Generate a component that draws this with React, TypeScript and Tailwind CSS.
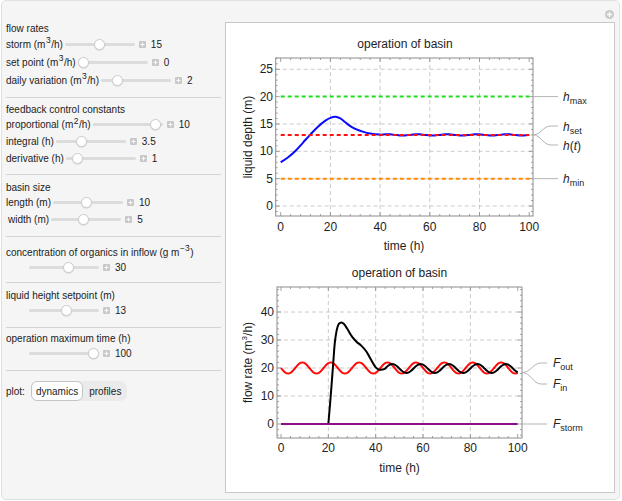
import React from 'react'

type Pt = [number, number]

const X1 = (t: number) => 280.7 + t * 2.485
const Y1 = (h: number) => 206 - h * 5.47
const X2 = (t: number) => 281 + t * 2.367
const Y2 = (f: number) => 424 - f * 2.8

const range = (a: number, b: number, s: number) => {
    const out: number[] = []
    for (let v = a; v <= b + 1e-9; v += s) out.push(Math.round(v * 100) / 100)
    return out
}

// catmull-rom through the points, as cubic beziers
const smooth = (pts: Pt[]) => {
    let d = `M${pts[0][0].toFixed(2)},${pts[0][1].toFixed(2)}`
    for (let i = 0; i < pts.length - 1; i++) {
        const p0 = pts[i - 1] || pts[i]
        const p1 = pts[i]
        const p2 = pts[i + 1]
        const p3 = pts[i + 2] || p2
        const c1x = p1[0] + (p2[0] - p0[0]) / 6
        const c1y = p1[1] + (p2[1] - p0[1]) / 6
        const c2x = p2[0] - (p3[0] - p1[0]) / 6
        const c2y = p2[1] - (p3[1] - p1[1]) / 6
        d += ` C${c1x.toFixed(2)},${c1y.toFixed(2)} ${c2x.toFixed(2)},${c2y.toFixed(2)} ${p2[0].toFixed(2)},${p2[1].toFixed(2)}`
    }
    return d
}

const poly = (pts: Pt[]) => pts.map(([x, y], i) => `${i ? 'L' : 'M'}${x.toFixed(2)},${y.toFixed(2)}`).join('')

// liquid depth h(t)
const depthPts: Pt[] = [
    [0, 8], [3, 8.9], [6, 10.1], [9, 11.6], [12, 13.1], [15, 14.5], [18, 15.6], [20, 16.1], [22, 16.3],
    [24, 16.0], [26, 15.3], [28, 14.6], [30, 14.1], [33, 13.6], [36, 13.25], [40, 13.05],
    ...range(42, 100, 2).map((t) => [t, 13 + 0.12 * Math.sin((2 * Math.PI * (t - 40)) / 12)] as Pt),
]

const fin = (t: number) => 20 - 2 * Math.sin((2 * Math.PI * t) / 12)
const foutPts: Pt[] = [
    [20, 0], [21, 10], [22, 21], [22.8, 29.5], [24, 35], [25.3, 36.2], [26.5, 35.8], [28, 34], [30, 31.2],
    [32, 29.3], [34, 27.9], [36, 26], [38, 23], [40, 20.2], [41.5, 19.4], [43, 19.5],
    ...range(44, 100, 1).map((t) => [t, 19.8 + 1.6 * Math.sin((2 * Math.PI * (t - 8)) / 12)] as Pt),
]

type FrameProps = {
    l: number, r: number, t: number, b: number,
    X: (v: number) => number, Y: (v: number) => number,
    xTicks: number[], yTicks: number[], xMaj: number, yMaj: number,
    xGrid: number[], yGrid: number[],
}

function Frame({l, r, t, b, X, Y, xTicks, yTicks, xMaj, yMaj, xGrid, yGrid}: FrameProps) {
    const grid: string[] = []
    xGrid.forEach((v) => grid.push(`M${X(v)},${t}V${b}`))
    yGrid.forEach((v) => grid.push(`M${l},${Y(v)}H${r}`))
    const ticks: string[] = []
    xTicks.forEach((v) => {
        const x = X(v)
        if (x < l || x > r) return
        const len = v % xMaj === 0 ? 4 : 2
        ticks.push(`M${x},${b}v${-len}M${x},${t}v${len}`)
    })
    yTicks.forEach((v) => {
        const y = Y(v)
        if (y < t || y > b) return
        const len = v % yMaj === 0 ? 4 : 2
        ticks.push(`M${l},${y}h${len}M${r},${y}h${-len}`)
    })
    return (
        <g>
            <path d={grid.join('')} stroke="#bdbdbd" strokeWidth={0.8} strokeDasharray="4 3" fill="none"/>
            <path d={ticks.join('')} stroke="#8c8c8c" strokeWidth={0.8} fill="none"/>
            <rect x={l} y={t} width={r - l} height={b - t} fill="none" stroke="#8c8c8c" strokeWidth={1}/>
        </g>
    )
}

function DepthChart() {
    const l = 275.7, r = 533, t = 58, b = 216
    const lead = '#b4b4b4'
    return (
        <svg width="388" height="235" viewBox="226 23 388 235" className="block">
            <text x={405} y={48} fontSize={12} textAnchor="middle" fill="#1e1e1e">operation of basin</text>
            <Frame l={l} r={r} t={t} b={b} X={X1} Y={Y1}
                   xTicks={range(0, 100, 4)} yTicks={range(-1, 27, 1)} xMaj={20} yMaj={5}
                   xGrid={[20, 40, 60, 80]} yGrid={[0, 5, 10, 15, 25]}/>
            <path d={`M${X1(0)},${Y1(20)}H${X1(100)}`} stroke="#1fdc1f" strokeWidth={2} strokeDasharray="4 3"/>
            <path d={`M${X1(0)},${Y1(5)}H${X1(100)}`} stroke="#ff8a00" strokeWidth={2} strokeDasharray="4 3"/>
            <path d={smooth(depthPts.map(([a, c]) => [X1(a), Y1(c)] as Pt))} stroke="#0a0aff" strokeWidth={2} fill="none"/>
            <path d={`M${X1(0)},${Y1(13)}H${X1(100)}`} stroke="#ff1010" strokeWidth={2} strokeDasharray="4 3"/>

            {range(0, 100, 20).map((v) => (
                <text key={v} x={X1(v)} y={231} fontSize={12} textAnchor="middle" fill="#1e1e1e">{v}</text>
            ))}
            {range(0, 25, 5).map((v) => (
                <text key={v} x={273} y={Y1(v) + 4} fontSize={12} textAnchor="end" fill="#1e1e1e">{v}</text>
            ))}
            <text x={404} y={250} fontSize={12} textAnchor="middle" fill="#1e1e1e">time (h)</text>
            <text x={248} y={141} fontSize={12} textAnchor="middle" fill="#1e1e1e" transform="rotate(-90 248 137)">liquid depth (m)</text>

            <path d={`M${r},${Y1(20)}H558`} stroke={lead} strokeWidth={1} fill="none"/>
            <path d={`M${r},${Y1(13)}C541,${Y1(13)} 543,126 551,126H558`} stroke={lead} strokeWidth={1} fill="none"/>
            <path d={`M${r},${Y1(13)}C541,${Y1(13)} 543,145 551,145H558`} stroke={lead} strokeWidth={1} fill="none"/>
            <path d={`M${r},${Y1(5)}H558`} stroke={lead} strokeWidth={1} fill="none"/>
            <text x={563} y={101} fontSize={12} fill="#1e1e1e">
                <tspan fontStyle="italic">h</tspan><tspan fontSize={9} dy={3}>max</tspan>
            </text>
            <text x={563} y={131} fontSize={12} fill="#1e1e1e">
                <tspan fontStyle="italic">h</tspan><tspan fontSize={9} dy={3}>set</tspan>
            </text>
            <text x={563} y={150} fontSize={12} fill="#1e1e1e">
                <tspan fontStyle="italic">h</tspan>(<tspan fontStyle="italic">t</tspan>)
            </text>
            <text x={563} y={183} fontSize={12} fill="#1e1e1e">
                <tspan fontStyle="italic">h</tspan><tspan fontSize={9} dy={3}>min</tspan>
            </text>
        </svg>
    )
}

function FlowChart() {
    const l = 277, r = 522, t = 287, b = 438
    const lead = '#b4b4b4'
    const red: Pt[] = range(0, 100, 0.5).map((v) => [X2(v), Y2(fin(v))])
    return (
        <svg width="388" height="234" viewBox="226 258 388 234" className="block">
            <text x={399.5} y={277} fontSize={12} textAnchor="middle" fill="#1e1e1e">operation of basin</text>
            <Frame l={l} r={r} t={t} b={b} X={X2} Y={Y2}
                   xTicks={range(0, 100, 4)} yTicks={range(-4, 48, 2)} xMaj={20} yMaj={10}
                   xGrid={[20, 40, 60, 80]} yGrid={[10, 20, 30, 40]}/>
            <path d={poly(red)} stroke="#ff0a0a" strokeWidth={2} fill="none"/>
            <path d={smooth(foutPts.map(([a, c]) => [X2(a), Y2(c)] as Pt))} stroke="#000" strokeWidth={2} fill="none"/>
            <path d={`M${X2(0)},${Y2(0)}H${X2(100)}`} stroke="#8a108a" strokeWidth={2}/>

            {range(0, 100, 20).map((v) => (
                <text key={v} x={X2(v)} y={452} fontSize={12} textAnchor="middle" fill="#1e1e1e">{v}</text>
            ))}
            {range(0, 40, 10).map((v) => (
                <text key={v} x={274} y={Y2(v) + 4} fontSize={12} textAnchor="end" fill="#1e1e1e">{v}</text>
            ))}
            <text x={399.5} y={472} fontSize={12} textAnchor="middle" fill="#1e1e1e">time (h)</text>
            <text x={248} y={366.5} fontSize={12} textAnchor="middle" fill="#1e1e1e" transform="rotate(-90 248 362.5)">
                flow rate (m<tspan fontSize={8} dy={-5}>3</tspan><tspan dy={5}>/h)</tspan>
            </text>

            <path d={`M${r},372.5C531,372.5 533,363 541,363H547`} stroke={lead} strokeWidth={1} fill="none"/>
            <path d={`M${r},372.5C531,372.5 533,384 541,384H547`} stroke={lead} strokeWidth={1} fill="none"/>
            <path d={`M${r},${Y2(0)}H547`} stroke={lead} strokeWidth={1} fill="none"/>
            <text x={553} y={367} fontSize={12} fill="#1e1e1e">
                <tspan fontStyle="italic">F</tspan><tspan fontSize={9} dy={3}>out</tspan>
            </text>
            <text x={553} y={388} fontSize={12} fill="#1e1e1e">
                <tspan fontStyle="italic">F</tspan><tspan fontSize={9} dy={3}>in</tspan>
            </text>
            <text x={553} y={428} fontSize={12} fill="#1e1e1e">
                <tspan fontStyle="italic">F</tspan><tspan fontSize={9} dy={3}>storm</tspan>
            </text>
        </svg>
    )
}

function PlusBox() {
    return (
        <svg width="7" height="7" viewBox="0 0 7 7" className="shrink-0">
            <rect width="7" height="7" rx="1" fill="#c8c8c8"/>
            <path d="M3.5 1.5v4M1.5 3.5h4" stroke="#fff" strokeWidth="1"/>
        </svg>
    )
}

function Track({frac}: {frac: number}) {
    return (
        <div className="relative flex h-[11px] w-[70px] shrink-0 items-center">
            <div className="h-[3px] w-full rounded-full bg-[#dcdcdc]"/>
            <div className="absolute top-0 h-[11px] w-[11px] rounded-full border border-[#cdcdcd] bg-white shadow-[0_0.5px_1px_rgba(0,0,0,0.15)]"
                 style={{left: frac * 59}}/>
        </div>
    )
}

function SliderRow({label, frac, value, h, indent}: {
    label?: React.ReactNode, frac: number, value: string, h: string, indent?: boolean
}) {
    return (
        <div className={`flex items-center whitespace-nowrap ${h}`}>
            {label}
            <div className={indent ? 'ml-[23px]' : 'ml-[2px]'}><Track frac={frac}/></div>
            <div className="ml-[4px]"><PlusBox/></div>
            <span className="ml-[5px]">{value}</span>
        </div>
    )
}

const Sup = ({children}: {children: React.ReactNode}) => <sup className="px-[0.5px] text-[8.5px]">{children}</sup>

const Sep = ({mt}: {mt: string}) => <div className={`h-px w-[215px] bg-[#d4d4d4] ${mt}`}/>

export default function App() {
    return (
        <div className="h-[501px] w-[622px] bg-white pl-px font-['Liberation_Sans',Arial,sans-serif]">
            <div className="flex h-[500px] w-[619px] rounded-[5px] border border-[#e1e1e1] bg-[#f5f5f5]">
                <div className="flex w-[223px] shrink-0 flex-col pl-[4px] pt-[20px] text-[10px] text-[#1c1c1c]">
                    <div className="flex h-[14px] items-center">flow rates</div>
                    <SliderRow h="h-[18px]" frac={0.5} value="15" label={<span>storm (m<Sup>3</Sup>/h)</span>}/>
                    <SliderRow h="h-[18px]" frac={0} value="0" label={<span>set point (m<Sup>3</Sup>/h)</span>}/>
                    <SliderRow h="h-[18px]" frac={0.19} value="2" label={<span>daily variation (m<Sup>3</Sup>/h)</span>}/>
                    <Sep mt="mt-[8px]"/>

                    <div className="mt-[4px] flex h-[14px] items-center">feedback control constants</div>
                    <SliderRow h="h-[17px]" frac={0.98} value="10" label={<span>proportional (m<Sup>2</Sup>/h)</span>}/>
                    <SliderRow h="h-[17px]" frac={0.35} value="3.5" label={<span>integral (h)</span>}/>
                    <SliderRow h="h-[17px]" frac={0.11} value="1" label={<span>derivative (h)</span>}/>
                    <Sep mt="mt-[7px]"/>

                    <div className="mt-[5px] flex h-[14px] items-center">basin size</div>
                    <SliderRow h="h-[17px]" frac={0.47} value="10" label={<span>length (m)</span>}/>
                    <SliderRow h="h-[17px]" frac={0.45} value="5" label={<span className="pl-[2px]">width (m)</span>}/>
                    <Sep mt="mt-[8px]"/>

                    <div className="mt-[8px] flex h-[14px] items-center">
                        <span>concentration of organics in inflow (g m<Sup>−3</Sup>)</span>
                    </div>
                    <SliderRow h="h-[16px]" frac={0.58} value="30" indent/>
                    <Sep mt="mt-[7px]"/>

                    <div className="mt-[5px] flex h-[14px] items-center">liquid height setpoint (m)</div>
                    <SliderRow h="h-[16px]" frac={0.54} value="13" indent/>
                    <Sep mt="mt-[9px]"/>

                    <div className="mt-[3px] flex h-[14px] items-center">operation maximum time (h)</div>
                    <SliderRow h="h-[16px]" frac={1} value="100" indent/>
                    <Sep mt="mt-[9px]"/>

                    <div className="mt-[10px] flex h-[20px] items-center">
                        <span>plot:</span>
                        <div className="ml-[6px] flex h-[20px] items-center rounded-[7px] bg-[#ebebeb]">
                            <div className="flex h-[20px] items-center rounded-[6px] border border-[#c4c4c4] bg-white px-[4px]">dynamics</div>
                            <div className="px-[6px]">profiles</div>
                        </div>
                    </div>
                </div>

                <div className="flex flex-col">
                    <div className="flex h-[21px] items-start justify-end pr-[1px] pt-[9px]">
                        <svg width="9" height="9" viewBox="0 0 9 9">
                            <circle cx="4.5" cy="4.5" r="4.5" fill="#c9c9c9"/>
                            <path d="M4.5 2v5M2 4.5h5" stroke="#fff" strokeWidth="1.3"/>
                        </svg>
                    </div>
                    <div className="flex h-[471px] w-[390px] flex-col border border-[#c8c8c8] bg-white">
                        <DepthChart/>
                        <FlowChart/>
                    </div>
                </div>
            </div>
        </div>
    )
}
